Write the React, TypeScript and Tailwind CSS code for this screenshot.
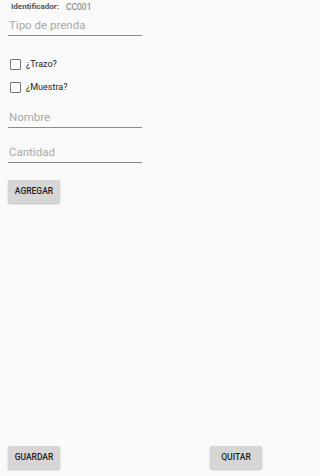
const Field = ({ label }: { label: string }) => (
  <div className="w-[134px] border-b border-[#8a8a8a] pb-[3px]">
    <p className="text-[11.5px] leading-[14px] text-[#a8a8a8] pl-[1px]">{label}</p>
  </div>
)

const Check = ({ label }: { label: string }) => (
  <div className="flex items-center gap-[5px] pl-[10px]">
    <span className="w-[11px] h-[11px] border-[1.5px] border-[#757575] rounded-[1px]" />
    <span className="text-[9px] leading-[11px] text-[#222]">{label}</span>
  </div>
)

const Btn = ({ label }: { label: string }) => (
  <button className="w-[52px] h-[23px] bg-[#d6d6d6] rounded-[2px] shadow-[0_1px_2px_rgba(0,0,0,0.25)] text-[8.5px] font-medium text-[#222]">
    {label}
  </button>
)

export default function App() {
  return (
    <div className="min-h-screen bg-[#fafafa]">
      <div className="w-[269px] h-[476px] flex flex-col font-['Roboto',sans-serif]">
        <div className="flex flex-col px-[8px] pt-[2px]">
          <div className="flex items-center gap-[7px] pl-[3px] leading-[10px]">
            <span className="text-[8px] font-bold text-[#555]">Identificador:</span>
            <span className="text-[8.5px] text-[#777]">CC001</span>
          </div>
          <div className="mt-[6px]">
            <Field label="Tipo de prenda" />
          </div>
        </div>
        <div className="flex flex-col gap-[12px] mt-[23px]">
          <Check label="¿Trazo?" />
          <Check label="¿Muestra?" />
        </div>
        <div className="flex flex-col px-[8px] mt-[17px]">
          <Field label="Nombre" />
          <div className="mt-[17px]">
            <Field label="Cantidad" />
          </div>
          <div className="mt-[14px]">
            <Btn label="AGREGAR" />
          </div>
        </div>
        <div className="mt-auto flex justify-between pl-[8px] pr-[7px] pb-[7px]">
          <Btn label="GUARDAR" />
          <Btn label="QUITAR" />
        </div>
      </div>
    </div>
  )
}
